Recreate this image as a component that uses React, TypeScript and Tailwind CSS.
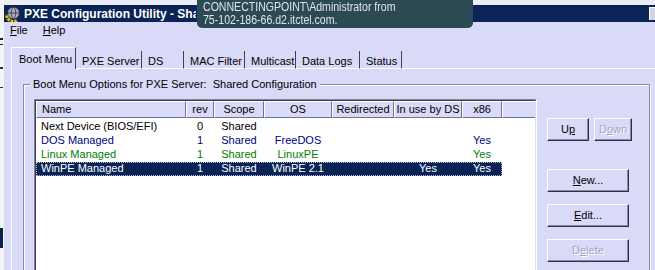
import React from "react";

const font = { fontFamily: '"Liberation Sans", Arial, sans-serif' };

const tabs = [
  { label: "Boot Menu", w: 65, active: true },
  { label: "PXE Server", w: 66 },
  { label: "DS", w: 42 },
  { label: "MAC Filter", w: 61 },
  { label: "Multicast", w: 51 },
  { label: "Data Logs", w: 64 },
  { label: "Status", w: 42 },
];

const cols = [
  { label: "Name", w: 150, align: "left" },
  { label: "rev", w: 28 },
  { label: "Scope", w: 50 },
  { label: "OS", w: 68 },
  { label: "Redirected", w: 62 },
  { label: "In use by DS", w: 68 },
  { label: "x86", w: 40 },
];

type Row = { cells: string[]; color: string; selected?: boolean };

const rows: Row[] = [
  { cells: ["Next Device (BIOS/EFI)", "0", "Shared", "", "", "", ""], color: "text-black" },
  { cells: ["DOS Managed", "1", "Shared", "FreeDOS", "", "", "Yes"], color: "text-[#000080]" },
  { cells: ["Linux Managed", "1", "Shared", "LinuxPE", "", "", "Yes"], color: "text-[#008000]" },
  { cells: ["WinPE Managed", "1", "Shared", "WinPE 2.1", "", "Yes", "Yes"], color: "text-white", selected: true },
];

function AppIcon() {
  return (
    <svg width="16" height="16" viewBox="0 0 16 16">
      <circle cx="8.5" cy="7" r="6" fill="#a8b0c4" stroke="#2a2a3a" strokeWidth="1" />
      <path d="M8.5 1 C5.5 4 5.5 10 8.5 13 M8.5 1 C11.5 4 11.5 10 8.5 13 M2.5 7 H14.5" stroke="#2a2a3a" strokeWidth="0.8" fill="none" />
      <path d="M1.5 8.5 A7 7 0 0 0 12 14.5" stroke="#e8c020" strokeWidth="3" fill="none" />
      <path d="M1.5 8.5 A7 7 0 0 0 12 14.5" stroke="#202020" strokeWidth="3" strokeDasharray="1 2.5" fill="none" />
    </svg>
  );
}

function Btn({ children, w, disabled }: { children: React.ReactNode; w: number; disabled?: boolean }) {
  return (
    <div
      style={{ width: w }}
      className={`h-[23px] flex items-center justify-center text-[11px] border border-t-white border-l-white border-r-[#303040] border-b-[#303040] shadow-[inset_-1px_-1px_0_#8888a8] ${
        disabled ? "text-[#a4a4c4] [text-shadow:1px_1px_0_#ffffff]" : "text-black"
      }`}
    >
      {children}
    </div>
  );
}

export default function App() {
  return (
    <div style={font} className="w-[655px] h-[270px] overflow-hidden relative flex bg-[#ececf8]">
      {/* window behind, left edge */}
      <div className="w-[4px] flex flex-col bg-[#f4f4f4]">
        <div className="h-[38px]" />
        <div className="h-[2px] w-[3px] bg-[#202020]" />
        <div className="h-[4px]" />
        <div className="h-[1px] w-[3px] bg-[#202020]" />
        <div className="h-[22px]" />
        <div className="h-[2px] w-[3px] bg-[#303030]" />
        <div className="h-[18px]" />
        <div className="h-[1px] w-[3px] bg-[#303030]" />
        <div className="h-[140px]" />
        <div className="h-[20px] w-[3px] bg-[#0a2050]" />
      </div>

      <div className="flex-1 flex flex-col pt-[5px]">
        {/* title bar */}
        <div className="h-[17px] bg-[#0b2457] flex items-center pl-[1px]">
          <AppIcon />
          <span className="ml-[3px] w-[172px] overflow-hidden text-white font-bold text-[12px] whitespace-nowrap">
            PXE Configuration Utility - Shared Configuration
          </span>
          <div className="ml-auto w-[6px] h-[13px] bg-[#d4d4e4] border-l border-t border-white" />
        </div>

        {/* menu bar */}
        <div className="h-[18px] bg-[#d9d9f8] flex items-center gap-[15px] pl-[6px] text-[11px] text-black">
          <span><span className="underline">F</span>ile</span>
          <span><span className="underline">H</span>elp</span>
        </div>

        {/* tab control */}
        <div className="flex-1 bg-[#d9d9f8] pl-[7px] pt-[8px] flex flex-col">
          <div className="flex items-end h-[22px]">
            {tabs.map((t) =>
              t.active ? (
                <div
                  key={t.label}
                  style={{ width: t.w }}
                  className="h-[22px] border-l border-t border-white border-r border-r-[#404050] pl-[7px] pt-[3px] text-[11px] text-black"
                >
                  {t.label}
                </div>
              ) : (
                <div
                  key={t.label}
                  style={{ width: t.w }}
                  className="h-[18px] border-b border-white border-r border-r-[#404050] pl-[6px] pt-[2px] text-[11px] text-black whitespace-nowrap"
                >
                  {t.label}
                </div>
              )
            )}
            <div className="flex-1 h-[18px] border-b border-white" />
          </div>

          <div className="flex-1 border-l border-white pl-[11px] pt-[15px]">
            {/* group box */}
            <div className="relative w-[627px] h-[200px] border border-[#8a8aa8] shadow-[inset_1px_1px_0_#ffffff,1px_1px_0_#ffffff] pl-[10px] pt-[14px] flex gap-[10px]">
              <span className="absolute left-[6px] top-[-8px] bg-[#d9d9f8] px-[3px] text-[11px] leading-[14px] text-black whitespace-nowrap">
                Boot Menu Options for PXE Server:&nbsp; Shared Configuration
              </span>

              {/* list view */}
              <div className="w-[503px] h-[190px] border border-t-[#8080a0] border-l-[#8080a0] border-r-white border-b-white">
                <div className="h-full bg-white border border-t-[#404050] border-l-[#404050] border-r-[#d9d9f8] border-b-[#d9d9f8]">
                  <div className="flex h-[17px]">
                    {cols.map((c) => (
                      <div
                        key={c.label}
                        style={{ width: c.w }}
                        className={`h-full bg-[#d9d9f8] border-t border-l border-white border-r border-r-[#707090] border-b border-b-[#707090] flex items-center text-[11px] text-black whitespace-nowrap ${
                          c.align === "left" ? "pl-[5px]" : "justify-center"
                        }`}
                      >
                        {c.label}
                      </div>
                    ))}
                    <div className="flex-1 h-full bg-[#d9d9f8] border-t border-l border-white border-b border-b-[#707090]" />
                  </div>
                  <div className="pt-[2px] flex flex-col">
                    {rows.map((r) => (
                      <div
                        key={r.cells[0]}
                        className={`flex h-[14px] w-[466px] items-center text-[11px] ${r.color} ${
                          r.selected ? "bg-[#0b2457] outline-1 outline-dotted outline-[#b8b8c8] -outline-offset-1" : ""
                        }`}
                      >
                        {cols.map((c, i) => (
                          <div
                            key={c.label}
                            style={{ width: c.w }}
                            className={`whitespace-nowrap ${c.align === "left" ? "pl-[5px]" : "text-center"}`}
                          >
                            {r.cells[i]}
                          </div>
                        ))}
                      </div>
                    ))}
                  </div>
                </div>
              </div>

              {/* buttons */}
              <div className="flex flex-col pt-[19px]">
                <div className="flex gap-[5px]">
                  <Btn w={42}>U<span className="underline">p</span></Btn>
                  <Btn w={38} disabled>D<span className="underline">o</span>wn</Btn>
                </div>
                <div className="h-[28px]" />
                <div className="flex flex-col gap-[12px]">
                  <Btn w={82}><span className="underline">N</span>ew...</Btn>
                  <Btn w={82}><span className="underline">E</span>dit...</Btn>
                  <Btn w={82} disabled>D<span className="underline">e</span>lete</Btn>
                </div>
              </div>
            </div>
          </div>
        </div>
      </div>

      {/* remote session overlay */}
      <div className="absolute left-[197px] top-0 w-[276px] h-[28px] bg-[#2c4a53] rounded-b-[5px] pl-[6px] pt-[1px] text-[#dde4ec] text-[12px] leading-[13px] whitespace-nowrap">
        <div className="origin-left scale-x-[0.88]">CONNECTINGPOINT\Administrator from</div>
        <div className="origin-left scale-x-[0.88]">75-102-186-66.d2.itctel.com.</div>
      </div>
    </div>
  );
}
